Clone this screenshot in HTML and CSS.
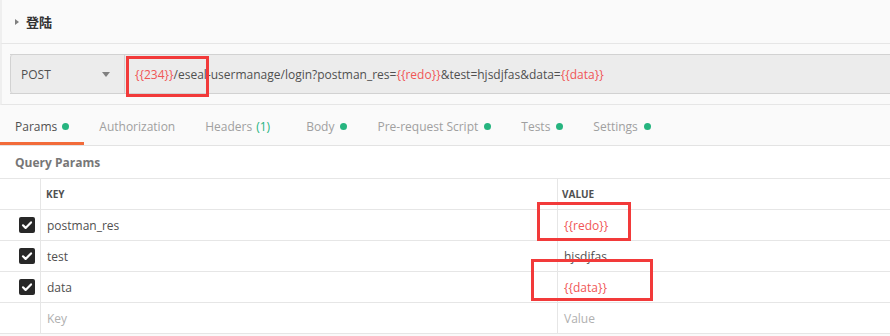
FILE: index.html
```html
<!DOCTYPE html>
<html lang="zh">
<head>
<meta charset="utf-8">
<title>登陆</title>
<link rel="stylesheet" href="styles.css">
</head>
<body>
<div class="page">
  <div class="header">
    <span class="tri"></span>
    <span class="title">登陆</span>
  </div>
  <div class="urlrow">
    <div class="urlbox">
      <div class="method"><span>POST</span><span class="caret"></span></div>
      <div class="url"><span class="var">{{234}}</span>/eseal-usermanage/login?postman_res=<span class="var">{{redo}}</span>&amp;test=hjsdjfas&amp;data=<span class="var">{{data}}</span></div>
    </div>
  </div>
  <div class="tabs">
    <div class="tab active">Params<span class="dot"></span></div>
    <div class="tab">Authorization</div>
    <div class="tab headers">Headers <span class="count">(1)</span></div>
    <div class="tab">Body<span class="dot"></span></div>
    <div class="tab">Pre-request Script<span class="dot"></span></div>
    <div class="tab">Tests<span class="dot"></span></div>
    <div class="tab">Settings<span class="dot"></span></div>
  </div>
  <div class="content">
    <div class="qp">Query Params</div>
    <div class="table">
      <div class="row head">
        <div class="c0"></div>
        <div class="c1">KEY</div>
        <div class="c2">VALUE</div>
      </div>
      <div class="row">
        <div class="c0"><span class="cb"><svg viewBox="0 0 16 16" width="16" height="16"><path d="M4 8.3l2.6 2.6L12 5.4" fill="none" stroke="#fff" stroke-width="2.2" stroke-linecap="round" stroke-linejoin="round"/></svg></span></div>
        <div class="c1">postman_res</div>
        <div class="c2 var">{{redo}}</div>
      </div>
      <div class="row">
        <div class="c0"><span class="cb"><svg viewBox="0 0 16 16" width="16" height="16"><path d="M4 8.3l2.6 2.6L12 5.4" fill="none" stroke="#fff" stroke-width="2.2" stroke-linecap="round" stroke-linejoin="round"/></svg></span></div>
        <div class="c1">test</div>
        <div class="c2">hjsdjfas</div>
      </div>
      <div class="row">
        <div class="c0"><span class="cb"><svg viewBox="0 0 16 16" width="16" height="16"><path d="M4 8.3l2.6 2.6L12 5.4" fill="none" stroke="#fff" stroke-width="2.2" stroke-linecap="round" stroke-linejoin="round"/></svg></span></div>
        <div class="c1">data</div>
        <div class="c2 var">{{data}}</div>
      </div>
      <div class="row">
        <div class="c0"></div>
        <div class="c1 ph">Key</div>
        <div class="c2 ph">Value</div>
      </div>
    </div>
  </div>
  <div class="mark m1"></div>
  <div class="mark m2"></div>
  <div class="mark m3"></div>
</div>
</body>
</html>
```
FILE: styles.css
```css
html, body {
  margin: 0;
  padding: 0;
}
body {
  width: 890px;
  height: 336px;
  overflow: hidden;
  background: #fafafa;
  font-family: "Open Sans", "Noto Sans CJK SC", sans-serif;
  font-size: 12px;
  color: #505050;
}
.page {
  position: relative;
  width: 890px;
  height: 336px;
  background: #fafafa;
}
.header {
  height: 43px;
  border-bottom: 1px solid #e6e6e6;
  display: flex;
  align-items: center;
  padding-left: 13px;
  border-left: 2px solid #efefef;
}
.tri {
  width: 0;
  height: 0;
  border-top: 3.5px solid transparent;
  border-bottom: 3.5px solid transparent;
  border-left: 4px solid #808080;
  margin-right: 7px;
  margin-top: 1px;
}
.title {
  font-family: "Noto Sans CJK SC", sans-serif;
  font-weight: bold;
  font-size: 13px;
  color: #333;
}
.urlrow {
  padding: 10px 0 10px 8px;
  border-bottom: 1px solid #e6e6e6;
  border-left: 2px solid #efefef;
}
.urlbox {
  display: flex;
  height: 38px;
  border-top: 1px solid #d2d2d2;
  border-bottom: 1px solid #d2d2d2;
  background: #ececec;
}
.method {
  width: 115px;
  border-left: 1px solid #d2d2d2;
  border-right: 1px solid #d2d2d2;
  border-radius: 3px 0 0 3px;
  display: flex;
  align-items: center;
  justify-content: space-between;
  padding: 0 14px 0 10px;
  box-sizing: border-box;
  color: #505050;
}
.caret {
  width: 0;
  height: 0;
  border-left: 4px solid transparent;
  border-right: 4px solid transparent;
  border-top: 5px solid #808080;
}
.url {
  display: flex;
  align-items: center;
  padding-left: 10px;
  white-space: pre;
  color: #505050;
}
.var {
  color: #f05656;
}
.tabs {
  display: flex;
  height: 40px;
  border-bottom: 1px solid #e3e3e3;
}
.tab {
  display: flex;
  align-items: center;
  padding: 6px 15px 0 15px;
  color: #a0a0a0;
  box-sizing: border-box;
  height: 40px;
  border-bottom: 3px solid transparent;
}
.tab.active {
  color: #505050;
  border-bottom-color: #f26b3a;
}
.tab.headers {
  padding-right: 21px;
}
.count {
  color: #26b47f;
  margin-left: 4px;
}
.dot {
  width: 7px;
  height: 7px;
  border-radius: 50%;
  background: #26b47f;
  margin-left: 6px;
}
.tab.active .dot {
  margin-left: 5px;
}
.content {
  background: #fff;
}
.qp {
  height: 32px;
  display: flex;
  align-items: center;
  padding-left: 15px;
  font-weight: bold;
  color: #777;
  background: #fff;
}
.table {
  border-top: 1px solid #e6e6e6;
  background: #fff;
}
.row {
  display: flex;
  height: 30px;
  border-bottom: 1px solid #e6e6e6;
}
.row > div {
  box-sizing: border-box;
}
.c0 {
  width: 41px;
  border-right: 1px solid #e6e6e6;
  display: flex;
  align-items: center;
  justify-content: flex-end;
  padding-right: 5px;
}
.c1 {
  width: 517px;
  border-right: 1px solid #e6e6e6;
  display: flex;
  align-items: center;
  padding-left: 6px;
}
.c2 {
  flex: 1;
  display: flex;
  align-items: center;
  padding-left: 6px;
}
.head .c1, .head .c2 {
  font-size: 10px;
  font-weight: bold;
  color: #505050;
  padding-left: 5px;
}
.head .c2 {
  padding-left: 4px;
}
.ph {
  color: #b0b0b0;
}
.cb {
  width: 16px;
  height: 16px;
  border-radius: 2px;
  background: #282828;
  display: flex;
}
.mark {
  position: absolute;
  border: 3px solid #f23a3a;
  box-sizing: border-box;
}
.m1 { left: 126px; top: 56px; width: 83px; height: 41px; }
.m2 { left: 537px; top: 202px; width: 94px; height: 39px; }
.m3 { left: 531px; top: 259px; width: 122px; height: 42px; }
```
